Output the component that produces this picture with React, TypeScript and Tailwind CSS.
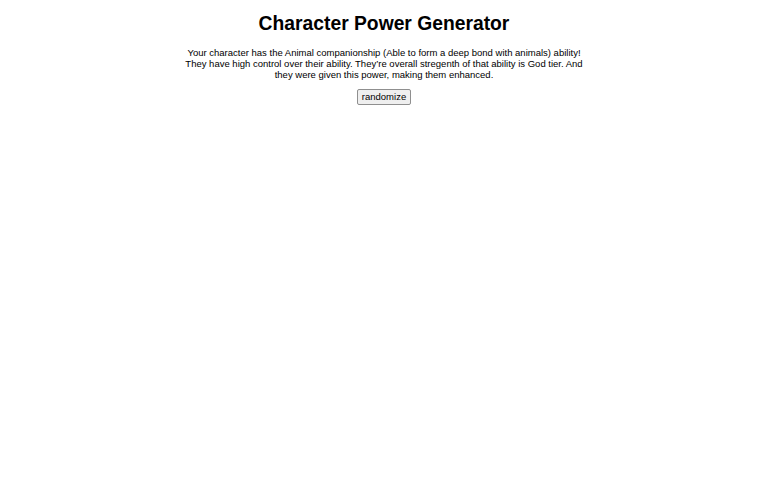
const App = () => {
  return (
    <div className="bg-white min-h-[480px] text-black text-center font-['Liberation_Sans',Arial,sans-serif]">
      <h1 className="pt-[12px] text-[19.3px] leading-[23px] font-bold">Character Power Generator</h1>
      <p className="mx-auto mt-[12px] w-[400px] text-[9.5px] leading-[11px]">
        Your character has the Animal companionship (Able to form a deep bond with animals) ability! They have high
        control over their ability. They’re overall stregenth of that ability is God tier. And they were given this
        power, making them enhanced.
      </p>
      <button className="mt-[9px] h-[16px] px-[4px] text-[9.5px] leading-[14px] bg-[#efefef] border border-[#8f8f8f] rounded-[2px]">
        randomize
      </button>
    </div>
  );
};

export default App;
